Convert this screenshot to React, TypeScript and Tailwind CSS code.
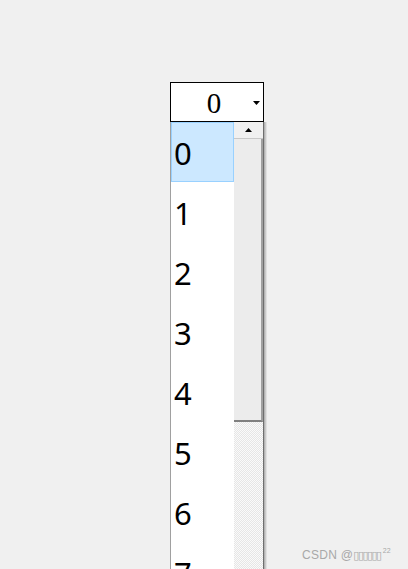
import React from "react";

const ITEMS = ["0", "1", "2", "3", "4", "5", "6", "7", "8"];

function DownArrow() {
  return (
    <svg width="7" height="4" viewBox="0 0 7 4" className="block">
      <path d="M0 0H7L3.5 4Z" fill="#000" />
    </svg>
  );
}

function UpArrow() {
  return (
    <svg width="7" height="4" viewBox="0 0 7 4" className="block">
      <path d="M0 4H7L3.5 0Z" fill="#000" />
    </svg>
  );
}

export default function App() {
  return (
    <div className="relative h-[569px] w-[408px] overflow-hidden bg-[#f0f0f0]">
      <div className="pl-[170px] pt-[82px]">
        {/* Combo box */}
        <div className="relative flex h-[40px] w-[94px] items-center border border-black bg-white">
          <span className="w-[82px] pl-[4px] pt-[2px] text-center font-['Liberation_Serif',serif] text-[29px] leading-none text-black">
            0
          </span>
          <span className="mt-[1px]">
            <DownArrow />
          </span>
        </div>

        {/* Drop-down list */}
        <div className="flex h-[460px] w-[97px]">
          <div className="flex w-[64px] flex-col border-l border-[#a0a0a0] bg-white">
            {ITEMS.map((item, index) => (
              <div
                key={item}
                className={
                  index === 0
                    ? "flex h-[60px] shrink-0 items-center border border-[#99d1ff] bg-[#cce8ff] pl-[2px] pt-[2px] font-['Noto_Sans',sans-serif] text-[31px] leading-none text-black"
                    : "flex h-[60px] shrink-0 items-center pl-[3px] pt-[2px] font-['Noto_Sans',sans-serif] text-[31px] leading-none text-black"
                }
              >
                {item}
              </div>
            ))}
          </div>
          <div className="flex w-[29px] flex-col bg-[#f0f0f0]">
            <div className="flex h-[17px] items-center justify-center border-b border-[#c8c8c8] bg-[#f0f0f0]">
              <UpArrow />
            </div>
            <div className="h-[283px] border-b-2 border-r-2 border-[#a0a0a0] border-b-[#808080] bg-[#ececec]" />
            <div className="flex-1 bg-[repeating-conic-gradient(#e6e6e6_0_25%,#fafafa_0_50%)] bg-[length:2px_2px]" />
          </div>
          <div className="w-[1px] bg-[#6e6e6e]" />
          <div className="w-[3px] bg-gradient-to-r from-[#a8a8a8] to-[#ececec]" />
        </div>
      </div>

      <div className="absolute left-[302px] top-[546px] font-['Liberation_Sans',sans-serif] text-[12px] tracking-[0.3px] text-[#a8a8a8]">
        CSDN @<span className="font-['DejaVu_Sans',sans-serif] text-[11px] tracking-[-1.5px]">▯▯▯▯▯▯</span>
        <span className="ml-[2px] align-top text-[7px]">22</span>
      </div>
    </div>
  );
}
